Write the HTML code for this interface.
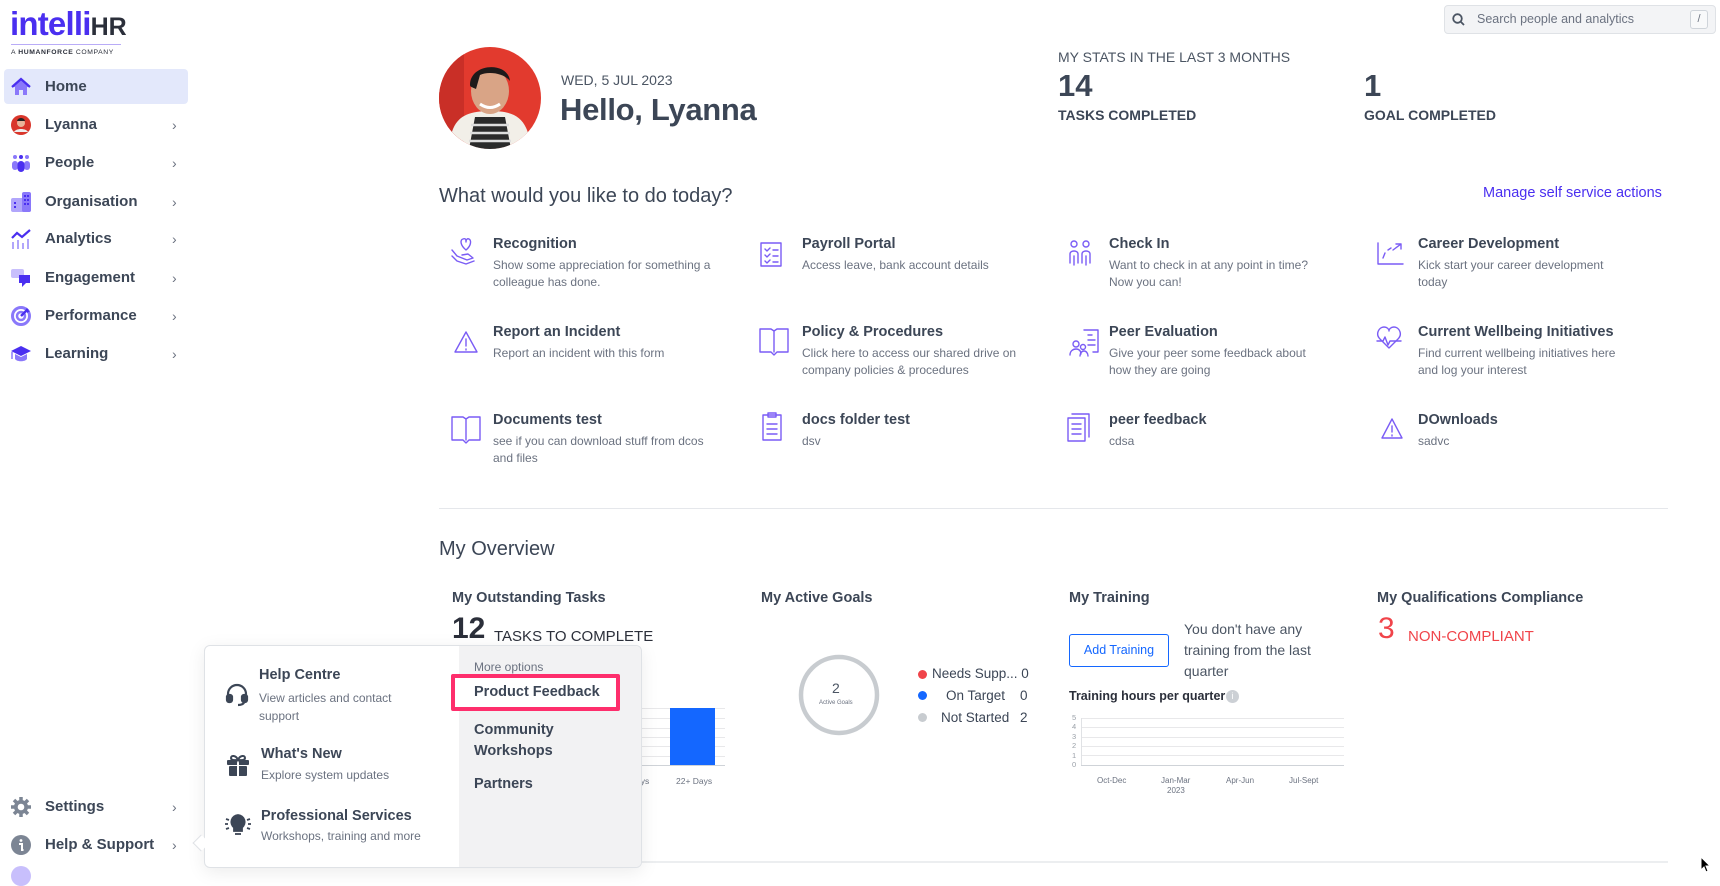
<!DOCTYPE html>
<html><head><meta charset="utf-8">
<style>
*{margin:0;padding:0;box-sizing:border-box}
body{width:1720px;height:873px;position:relative;overflow:hidden;background:#fff;font-family:"Liberation Sans",sans-serif;color:#3c4656}
.a{position:absolute;white-space:nowrap}
.nav{position:absolute;left:0;width:190px;height:36px;font-size:15px;font-weight:bold;color:#3c4656;line-height:36px}
.nav .t{position:absolute;left:45px}
.nav .ic{position:absolute;left:11px;top:8px;width:20px;height:20px}
.nav .ch{position:absolute;left:172px;top:0;color:#6b7280;font-weight:normal;font-size:14px}
.tile .h{font-size:14.5px;font-weight:bold;color:#3c4656}
.tile .d{font-size:12px;color:#6b7280;line-height:16.5px;white-space:normal;width:215px}
.sec{font-size:20px;color:#3c4656}
.ot{font-size:14.5px;font-weight:bold;color:#3c4656}
.gl{position:absolute;height:1px;background:#e8e8ea}
</style></head><body>

<!-- logo -->
<div class="a" style="left:10px;top:6px;font-size:33px;color:#4a2ff0;letter-spacing:-0.8px;line-height:36px;font-weight:bold">intelli<span style="color:#2b2f3a;font-weight:bold;font-size:25px;letter-spacing:0">HR</span></div>
<div class="a" style="left:11px;top:44px;width:110px;height:1px;background:#b9acf7"></div>
<div class="a" style="left:11px;top:49px;font-size:6.8px;letter-spacing:0.6px;color:#2b2f3a">A <b>HUMANFORCE</b> COMPANY</div>

<!-- nav -->
<div class="a" style="left:4px;top:69px;width:184px;height:35px;background:#e3e8fb;border-radius:4px"></div>
<div class="nav" style="top:69px"><svg class="ic" viewBox="0 0 20 20"><path d="M10 2L1 10h3v8h4v-5h4v5h4v-8h3z" fill="#8a78fa"/><path d="M1 10L10 2l9 8" stroke="#4a2ff0" stroke-width="2.2" fill="none"/></svg><span class="t">Home</span></div>
<div class="nav" style="top:107px"><svg class="ic" viewBox="0 0 20 20"><circle cx="10" cy="10" r="10" fill="#d9362b"/><circle cx="10" cy="8" r="4" fill="#e9b49a"/><path d="M3 17c2-4 12-4 14 0" fill="#eee"/><path d="M6 6c1-4 7-4 8 0" fill="#222"/></svg><span class="t">Lyanna</span><span class="ch">›</span></div>
<div class="nav" style="top:145px"><svg class="ic" viewBox="0 0 20 20"><circle cx="4" cy="4" r="2" fill="#8a78fa"/><circle cx="10" cy="4" r="2" fill="#4a2ff0"/><circle cx="16" cy="4" r="2" fill="#8a78fa"/><rect x="1" y="8" width="6" height="9" rx="3" fill="#8a78fa"/><rect x="13" y="8" width="6" height="9" rx="3" fill="#8a78fa"/><rect x="6.5" y="8" width="7" height="11" rx="3.5" fill="#4a2ff0"/></svg><span class="t">People</span><span class="ch">›</span></div>
<div class="nav" style="top:184px"><svg class="ic" viewBox="0 0 20 20"><rect x="0" y="6" width="20" height="14" rx="2" fill="#b1a6fb"/><rect x="11" y="0" width="9" height="20" rx="2" fill="#8a78fa"/><g fill="#4a2ff0"><rect x="3" y="10" width="2" height="2"/><rect x="3" y="14" width="2" height="2"/><rect x="13" y="3" width="2" height="2"/><rect x="16" y="3" width="2" height="2"/><rect x="13" y="7" width="2" height="2"/><rect x="16" y="7" width="2" height="2"/><rect x="13" y="11" width="2" height="2"/><rect x="16" y="11" width="2" height="2"/></g></svg><span class="t">Organisation</span><span class="ch">›</span></div>
<div class="nav" style="top:221px"><svg class="ic" viewBox="0 0 20 20"><g fill="#b1a6fb"><rect x="1" y="13" width="2" height="7"/><rect x="6" y="11" width="2" height="9"/><rect x="11" y="14" width="2" height="6"/><rect x="16" y="10" width="2" height="10"/></g><path d="M1 9l5-5 5 4 8-7" stroke="#4a2ff0" stroke-width="2.2" fill="none"/></svg><span class="t">Analytics</span><span class="ch">›</span></div>
<div class="nav" style="top:260px"><svg class="ic" viewBox="0 0 20 20"><rect x="0" y="1" width="13" height="9" rx="2" fill="#c8bffc"/><path d="M8 7h11v8h-4l-4 4v-4H8z" fill="#4a2ff0"/></svg><span class="t">Engagement</span><span class="ch">›</span></div>
<div class="nav" style="top:298px"><svg class="ic" viewBox="0 0 20 20"><circle cx="10" cy="10" r="8.5" stroke="#8a78fa" stroke-width="3" fill="none"/><circle cx="10" cy="10" r="4" stroke="#8a78fa" stroke-width="2.5" fill="none"/><path d="M10 10l7-7" stroke="#4a2ff0" stroke-width="2.4"/><path d="M15 1l1 3 3 1-3 2z" fill="#4a2ff0"/></svg><span class="t">Performance</span><span class="ch">›</span></div>
<div class="nav" style="top:336px"><svg class="ic" viewBox="0 0 20 20"><path d="M10 2L0 7l10 5 10-5z" fill="#4a2ff0"/><path d="M4 10v5c2 3 10 3 12 0v-5l-6 3z" fill="#8a78fa"/><path d="M1 8v7" stroke="#8a78fa" stroke-width="1.5"/></svg><span class="t">Learning</span><span class="ch">›</span></div>
<div class="nav" style="top:789px"><svg class="ic" viewBox="0 0 20 20"><circle cx="10" cy="10" r="7" fill="#7c8594"/><g stroke="#7c8594" stroke-width="3.5"><path d="M10 0v20M0 10h20M3 3l14 14M17 3L3 17"/></g><circle cx="10" cy="10" r="3.3" fill="#fff"/></svg><span class="t">Settings</span><span class="ch">›</span></div>
<div class="nav" style="top:827px"><svg class="ic" viewBox="0 0 20 20"><circle cx="10" cy="10" r="10" fill="#7c8594"/><circle cx="10" cy="5.5" r="1.4" fill="#fff"/><path d="M8 9h3v6h1.5" stroke="#fff" stroke-width="2" fill="none"/></svg><span class="t">Help &amp; Support</span><span class="ch">›</span></div>
<div class="a" style="left:11px;top:866px;width:20px;height:20px;border-radius:50%;background:#c8bffc"></div>

<!-- search -->
<div class="a" style="left:1444px;top:5px;width:272px;height:29px;background:#f3f4f6;border:1px solid #dfe2e6;border-radius:4px"></div>
<svg class="a" style="left:1452px;top:13px" width="13" height="13" viewBox="0 0 13 13"><circle cx="5.5" cy="5.5" r="4.3" stroke="#4b5563" stroke-width="1.8" fill="none"/><path d="M8.5 8.5l3.5 3.5" stroke="#4b5563" stroke-width="1.8"/></svg>
<div class="a" style="left:1477px;top:12px;font-size:12.5px;color:#6b7280">Search people and analytics</div>
<div class="a" style="left:1690px;top:10px;width:18px;height:19px;border:1px solid #cfd4da;border-radius:3px;background:#f8f9fa;font-size:11px;color:#6b7280;text-align:center;line-height:17px">/</div>

<!-- header -->
<svg class="a" style="left:439px;top:47px" width="102" height="102" viewBox="0 0 102 102"><defs><clipPath id="c"><circle cx="51" cy="51" r="51"/></clipPath></defs><g clip-path="url(#c)"><rect width="102" height="102" fill="#e23a2e"/><rect x="0" y="0" width="25" height="102" fill="#c92f27"/><path d="M10 102c2-30 14-38 41-38s38 8 41 38z" fill="#f2efe8"/><path d="M30 102l6-32h30l6 32z" fill="#2a2a2a"/><g stroke="#ddd" stroke-width="2.5"><path d="M32 78h38M31 86h40M30 94h42"/></g><ellipse cx="51" cy="44" rx="19" ry="23" fill="#d9a486"/><path d="M31 38c0-22 38-24 40-4-6-8-22-10-30-6l-4 14c-4-2-6-2-6-4z" fill="#1e1a1a"/><path d="M41 57q10 7 20 0" stroke="#fff" stroke-width="3" fill="none"/></g></svg>
<div class="a" style="left:561px;top:72px;font-size:14px;color:#4b5563">WED, 5 JUL 2023</div>
<div class="a" style="left:560px;top:92px;font-size:31px;color:#3c4656;font-weight:bold;letter-spacing:-0.3px">Hello, Lyanna</div>
<div class="a" style="left:1058px;top:49px;font-size:14px;color:#4b5563">MY STATS IN THE LAST 3 MONTHS</div>
<div class="a" style="left:1058px;top:68px;font-size:31px;color:#3c4656;font-weight:bold">14</div>
<div class="a" style="left:1058px;top:107px;font-size:14px;color:#3c4656;font-weight:bold">TASKS COMPLETED</div>
<div class="a" style="left:1364px;top:68px;font-size:31px;color:#3c4656;font-weight:bold">1</div>
<div class="a" style="left:1364px;top:107px;font-size:14px;color:#3c4656;font-weight:bold">GOAL COMPLETED</div>

<div class="a sec" style="left:439px;top:185px">What would you like to do today?</div>
<div class="a" style="left:1483px;top:185px;font-size:14.5px;color:#4a2ff0">Manage self service actions</div>

<!-- tiles -->
<div class="a tile" style="left:493px;top:236px"><div class="h">Recognition</div><div class="d" style="margin-top:5px;width:222px">Show some appreciation for something a colleague has done.</div></div>
<div class="a tile" style="left:802px;top:236px"><div class="h">Payroll Portal</div><div class="d" style="margin-top:5px">Access leave, bank account details</div></div>
<div class="a tile" style="left:1109px;top:236px"><div class="h">Check In</div><div class="d" style="margin-top:5px">Want to check in at any point in time? Now you can!</div></div>
<div class="a tile" style="left:1418px;top:236px"><div class="h">Career Development</div><div class="d" style="margin-top:5px">Kick start your career development today</div></div>
<div class="a tile" style="left:493px;top:324px"><div class="h">Report an Incident</div><div class="d" style="margin-top:5px">Report an incident with this form</div></div>
<div class="a tile" style="left:802px;top:324px"><div class="h">Policy &amp; Procedures</div><div class="d" style="margin-top:5px;width:232px">Click here to access our shared drive on company policies &amp; procedures</div></div>
<div class="a tile" style="left:1109px;top:324px"><div class="h">Peer Evaluation</div><div class="d" style="margin-top:5px">Give your peer some feedback about how they are going</div></div>
<div class="a tile" style="left:1418px;top:324px"><div class="h">Current Wellbeing Initiatives</div><div class="d" style="margin-top:5px">Find current wellbeing initiatives here and log your interest</div></div>
<div class="a tile" style="left:493px;top:412px"><div class="h">Documents test</div><div class="d" style="margin-top:5px;width:232px">see if you can download stuff from dcos and files</div></div>
<div class="a tile" style="left:802px;top:412px"><div class="h">docs folder test</div><div class="d" style="margin-top:5px">dsv</div></div>
<div class="a tile" style="left:1109px;top:412px"><div class="h">peer feedback</div><div class="d" style="margin-top:5px">cdsa</div></div>
<div class="a tile" style="left:1418px;top:412px"><div class="h">DOwnloads</div><div class="d" style="margin-top:5px">sadvc</div></div>

<svg class="a" style="left:0;top:0" width="1720" height="480" fill="none" stroke="#7a5cf5" stroke-width="1.4" stroke-linecap="round" stroke-linejoin="round">
<path d="M466 250c-6-5-6-10-3-11s3 1 3 3c0-2 1-4 3-3s3 6-3 11z"/><path d="M452 250l5 6 10 4 6-2-5-4-6 1M452 256l5 5 9 3 8-3"/>
<rect x="761" y="243" width="20" height="23"/><path d="M765 249l2 2 3-3M765 255l2 2 3-3M765 261l2 2 3-3M773 250h5M773 256h5M773 262h5"/>
<circle cx="1074" cy="244" r="3"/><circle cx="1086" cy="244" r="3"/><path d="M1070 263v-9c0-4 8-4 8 0v9M1082 263v-9c0-4 8-4 8 0v9M1074 256v9M1086 256v9"/>
<path d="M1378 243v21h25M1383 258l2-5M1388 250l3-2M1393 250l8-6M1396 244h5v5"/>
<path d="M466 332l-11 20h22z M466 339v7M466 349v1"/>
<path d="M760 329v23h11l3 3 3-3h11v-23h-11l-3 2-3-2zM774 331v21"/>
<path d="M1084 330h14v22h-5M1088 335h4M1088 340h7M1088 345h7"/><circle cx="1076" cy="344" r="3"/><circle cx="1083" cy="347" r="2.5"/><path d="M1070 355c0-4 3-6 6-6s5 2 5 5M1080 356c0-3 2-5 4-5s4 2 4 5"/>
<path d="M1389 348l-9-9c-5-5-1-12 4-12 3 0 5 2 5 4 0-2 2-4 5-4 5 0 9 7 4 12z"/><path d="M1377 341h6l2-4 3 8 2-4h11"/>
<path d="M452 417v23h11l3 3 3-3h11v-23h-11l-3 2-3-2zM466 419v21"/>
<path d="M763 415h18v25h-18zM768 413h8v4h-8zM767 424h10M767 429h10M767 434h10"/>
<path d="M1068 418h17v23h-17zM1072 414h17v23M1072 424h9M1072 429h9M1072 434h9"/>
<path d="M1392 419l-10 19h20zM1392 426v6M1392 435v1"/>
</svg>

<div class="a" style="left:439px;top:508px;width:1229px;height:1px;background:#e5e7eb"></div>
<div class="a sec" style="left:439px;top:538px">My Overview</div>

<!-- overview -->
<div class="a ot" style="left:452px;top:590px">My Outstanding Tasks</div>
<div class="a" style="left:452px;top:612px;font-size:30px;color:#2b2f3a;font-weight:bold">12</div>
<div class="a" style="left:494px;top:628px;font-size:15px;color:#2b2f3a;font-weight:500">TASKS TO COMPLETE</div>
<div class="gl" style="left:640px;top:708px;width:85px"></div>
<div class="gl" style="left:640px;top:718px;width:85px"></div>
<div class="gl" style="left:640px;top:728px;width:85px"></div>
<div class="gl" style="left:640px;top:737px;width:85px"></div>
<div class="gl" style="left:640px;top:746px;width:85px"></div>
<div class="gl" style="left:640px;top:756px;width:85px"></div>
<div class="a" style="left:640px;top:765px;width:85px;height:1px;background:#cfd3d8"></div>
<div class="a" style="left:670px;top:708px;width:45px;height:57px;background:#1467ff"></div>
<div class="a" style="left:676px;top:776px;font-size:8.5px;color:#6b7280">22+ Days</div>
<div class="a" style="left:636px;top:776px;font-size:8.5px;color:#6b7280">ays</div>

<div class="a ot" style="left:761px;top:590px">My Active Goals</div>
<svg class="a" style="left:796px;top:652px" width="86" height="86"><circle cx="43" cy="43" r="38" stroke="#c8ccd0" stroke-width="4.5" fill="none"/></svg>
<div class="a" style="left:832px;top:680px;font-size:14px;color:#4b5563">2</div>
<div class="a" style="left:819px;top:700px;font-size:6px;color:#6b7280">Active Goals</div>
<div class="a" style="left:918px;top:670px;width:9px;height:9px;border-radius:50%;background:#f0444a"></div>
<div class="a" style="left:918px;top:691px;width:9px;height:9px;border-radius:50%;background:#1467ff"></div>
<div class="a" style="left:918px;top:713px;width:9px;height:9px;border-radius:50%;background:#c8ccd0"></div>
<div class="a" style="left:932px;top:666px;font-size:13.5px;color:#3c4656">Needs Supp... 0</div>
<div class="a" style="left:946px;top:688px;font-size:13.5px;color:#3c4656">On Target</div>
<div class="a" style="left:1020px;top:688px;font-size:13.5px;color:#3c4656">0</div>
<div class="a" style="left:941px;top:710px;font-size:13.5px;color:#3c4656">Not Started</div>
<div class="a" style="left:1020px;top:710px;font-size:13.5px;color:#3c4656">2</div>

<div class="a ot" style="left:1069px;top:590px">My Training</div>
<div class="a" style="left:1069px;top:634px;width:100px;height:33px;border:1.5px solid #1467ff;border-radius:3px;font-size:12.5px;color:#1467ff;text-align:center;line-height:30px;font-weight:500">Add Training</div>
<div class="a" style="left:1184px;top:619px;font-size:14px;color:#4b5563;line-height:21px;white-space:normal;width:148px">You don't have any training from the last quarter</div>
<div class="a" style="left:1069px;top:689px;font-size:12.5px;color:#2b2f3a;font-weight:bold">Training hours per quarter</div>
<div class="a" style="left:1226px;top:690px;width:13px;height:13px;border-radius:50%;background:#ccd0d5;color:#fff;font-size:9px;text-align:center;line-height:13px">i</div>
<div class="gl" style="left:1081px;top:718px;width:263px"></div>
<div class="gl" style="left:1081px;top:727px;width:263px"></div>
<div class="gl" style="left:1081px;top:737px;width:263px"></div>
<div class="gl" style="left:1081px;top:746px;width:263px"></div>
<div class="gl" style="left:1081px;top:755px;width:263px"></div>
<div class="a" style="left:1081px;top:765px;width:263px;height:1px;background:#cfd3d8"></div>
<div class="a" style="left:1081px;top:718px;width:1px;height:47px;background:#e0e2e5"></div>
<div class="a" style="left:1072px;top:713px;font-size:7.5px;color:#9aa0a8;line-height:9.4px;white-space:normal;width:8px">5 4 3 2 1 0</div>
<div class="a" style="left:1097px;top:776px;font-size:8px;color:#6b7280">Oct-Dec</div>
<div class="a" style="left:1161px;top:776px;font-size:8px;color:#6b7280">Jan-Mar</div>
<div class="a" style="left:1167px;top:786px;font-size:8px;color:#6b7280">2023</div>
<div class="a" style="left:1226px;top:776px;font-size:8px;color:#6b7280">Apr-Jun</div>
<div class="a" style="left:1289px;top:776px;font-size:8px;color:#6b7280">Jul-Sept</div>

<div class="a ot" style="left:1377px;top:590px">My Qualifications Compliance</div>
<div class="a" style="left:1378px;top:612px;font-size:30px;color:#f0444a">3</div>
<div class="a" style="left:1408px;top:628px;font-size:15px;color:#f0444a;font-weight:500">NON-COMPLIANT</div>

<div class="a" style="left:640px;top:861px;width:1028px;height:2px;background:#eceef0"></div>

<!-- popup -->
<div class="a" style="left:204px;top:645px;width:438px;height:223px;background:#fff;border:1px solid #dfe2e6;border-radius:6px;box-shadow:0 4px 18px rgba(0,0,0,0.08);overflow:hidden">
 <div style="position:absolute;left:254px;top:0;width:184px;height:223px;background:#f2f2f3"></div>
</div>
<div class="a" style="left:195px;top:837px;width:12px;height:12px;border-left:1px solid #dfe2e6;border-bottom:1px solid #dfe2e6;background:#fff;transform:rotate(45deg)"></div>
<svg class="a" style="left:225px;top:683px" width="24" height="24" viewBox="0 0 24 24" fill="none" stroke="#3c4656" stroke-width="2.2"><path d="M3 14v-3a9 9 0 0118 0v3"/><rect x="2" y="12" width="5" height="7" rx="2" fill="#3c4656"/><rect x="17" y="12" width="5" height="7" rx="2" fill="#3c4656"/><path d="M19 19c0 2-3 3-6 3"/></svg>
<div class="a" style="left:259px;top:667px;font-size:14.5px;font-weight:bold;color:#3c4656">Help Centre</div>
<div class="a" style="left:259px;top:689px;font-size:12px;color:#6b7280;line-height:18px">View articles and contact<br>support</div>
<svg class="a" style="left:226px;top:754px" width="24" height="22" viewBox="0 0 24 22" fill="#3c4656"><rect x="1" y="6" width="22" height="5" rx="1"/><rect x="3" y="12" width="18" height="10" rx="1"/><rect x="11" y="6" width="2" height="16" fill="#fff"/><path d="M12 6c-2-5-7-5-7-2s5 2 7 2c2 0 7 1 7-2s-5-3-7 2z" stroke="#3c4656" stroke-width="2" fill="none"/></svg>
<div class="a" style="left:261px;top:746px;font-size:14.5px;font-weight:bold;color:#3c4656">What's New</div>
<div class="a" style="left:261px;top:768px;font-size:12px;color:#6b7280">Explore system updates</div>
<svg class="a" style="left:224px;top:812px" width="28" height="26" viewBox="0 0 28 26" fill="none" stroke="#3c4656" stroke-width="1.8"><path d="M14 3a7 7 0 00-4 12.5V19h8v-3.5A7 7 0 0014 3z" fill="#3c4656"/><path d="M11 22h6"/><path d="M2 7l3 1M1 12h3M2 17l3-1M26 7l-3 1M27 12h-3M26 17l-3-1"/></svg>
<div class="a" style="left:261px;top:808px;font-size:14.5px;font-weight:bold;color:#3c4656">Professional Services</div>
<div class="a" style="left:261px;top:829px;font-size:12px;color:#6b7280">Workshops, training and more</div>

<div class="a" style="left:474px;top:660px;font-size:12px;color:#6b7280">More options</div>
<div class="a" style="left:451px;top:674px;width:169px;height:37px;border:4px solid #fe2e6c;border-radius:2px;background:#fff"></div>
<div class="a" style="left:474px;top:684px;font-size:14.5px;font-weight:bold;color:#3c4656">Product Feedback</div>
<div class="a" style="left:474px;top:720px;font-size:14.5px;font-weight:bold;color:#3c4656;line-height:21px">Community<br>Workshops</div>
<div class="a" style="left:474px;top:776px;font-size:14.5px;font-weight:bold;color:#3c4656">Partners</div>

<svg class="a" style="left:1700px;top:856px" width="12" height="17" viewBox="0 0 12 17"><path d="M1 1v13l3-3 2 5 2-1-2-5h4z" fill="#000" stroke="#fff" stroke-width="1"/></svg>
</body></html>
